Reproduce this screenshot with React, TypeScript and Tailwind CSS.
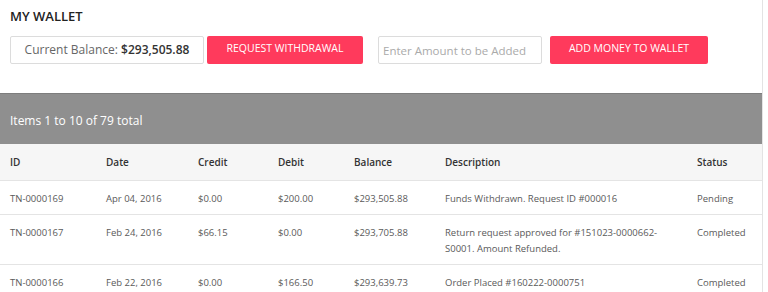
const ROWS = [
  {
    id: "TN-0000169",
    date: "Apr 04, 2016",
    credit: "$0.00",
    debit: "$200.00",
    balance: "$293,505.88",
    desc: "Funds Withdrawn. Request ID #000016",
    status: "Pending",
  },
  {
    id: "TN-0000167",
    date: "Feb 24, 2016",
    credit: "$66.15",
    debit: "$0.00",
    balance: "$293,705.88",
    desc: "Return request approved for #151023-0000662-S0001. Amount Refunded.",
    status: "Completed",
  },
  {
    id: "TN-0000166",
    date: "Feb 22, 2016",
    credit: "$0.00",
    debit: "$166.50",
    balance: "$293,639.73",
    desc: "Order Placed #160222-0000751",
    status: "Completed",
  },
];

const COLS = ["ID", "Date", "Credit", "Debit", "Balance", "Description", "Status"];
const WIDTHS = ["w-[96px]", "w-[92px]", "w-[80px]", "w-[76px]", "w-[91px]", "w-[252px]", "w-[75px]"];

export default function App() {
  return (
    <div className="h-[292px] w-[768px] overflow-hidden bg-white font-['Open_Sans',sans-serif]">
      <div className="w-[763px] border-r border-[#e3e3e3]">
        <h1 className="px-[10px] pt-[6px] text-[13px] font-semibold leading-[20px] text-[#222]">MY WALLET</h1>

        <div className="flex items-center px-[10px] pt-[10px]">
          <div className="flex h-[28px] w-[194px] items-center justify-center rounded-[2px] border border-[#dcdcdc] text-[12px] text-[#666]">
            Current Balance:&nbsp;<span className="font-semibold text-[#333]">$293,505.88</span>
          </div>
          <button className="ml-[3px] h-[28px] w-[156px] rounded-[2px] bg-[#ff3a5c] pb-[2px] text-[10.5px] text-white">
            REQUEST WITHDRAWAL
          </button>
          <input
            placeholder="Enter Amount to be Added"
            className="ml-[15px] h-[28px] w-[164px] rounded-[2px] border border-[#dcdcdc] px-[4px] text-[11.5px] text-[#555] placeholder:text-[#aaa] outline-none"
          />
          <button className="ml-[8px] h-[28px] w-[158px] rounded-[2px] bg-[#ff3a5c] pb-[2px] text-[10.5px] text-white">
            ADD MONEY TO WALLET
          </button>
        </div>

        <div className="mt-[29px] flex h-[51px] items-center border-t border-[#7d7d7d] bg-[#8f8f8f] px-[10px] pt-[4px] text-[12px] text-white">
          Items 1 to 10 of 79 total
        </div>

        <table className="w-[762px] table-fixed border-collapse text-[9.5px] text-[#5a5a5a]">
          <thead>
            <tr className="h-[36px] border-b border-[#e4e4e4] bg-[#f6f6f6]">
              {COLS.map((c, i) => (
                <th key={c} className={`${WIDTHS[i]} px-[10px] pt-[2px] text-left text-[10px] font-semibold text-[#333]`}>
                  {c}
                </th>
              ))}
            </tr>
          </thead>
          <tbody>
            {ROWS.map((r) => (
              <tr key={r.id} className="border-b border-[#e4e4e4] align-top leading-[15.5px]">
                <td className="px-[10px] pt-[10px] pb-[8px]">{r.id}</td>
                <td className="px-[10px] pt-[10px] pb-[8px]">{r.date}</td>
                <td className="px-[10px] pt-[10px] pb-[8px]">{r.credit}</td>
                <td className="px-[10px] pt-[10px] pb-[8px]">{r.debit}</td>
                <td className="px-[10px] pt-[10px] pb-[8px]">{r.balance}</td>
                <td className="px-[10px] pt-[10px] pb-[8px]">{r.desc}</td>
                <td className="px-[10px] pt-[10px] pb-[8px]">{r.status}</td>
              </tr>
            ))}
          </tbody>
        </table>
      </div>
    </div>
  );
}
